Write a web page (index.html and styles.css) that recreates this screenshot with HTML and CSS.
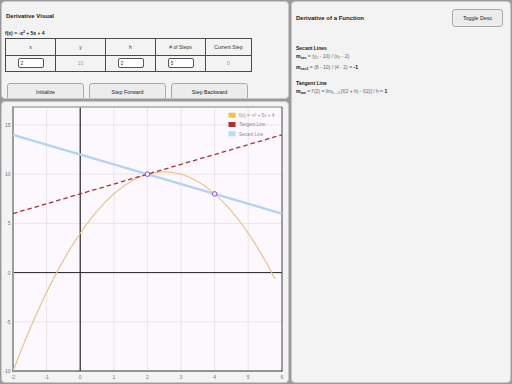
FILE: index.html
```html
<!DOCTYPE html>
<html lang="en">
<head>
  <meta charset="UTF-8">
  <meta name="viewport" content="width=device-width, initial-scale=1.0">
  <title>Derivative Visual</title>
  <link rel="stylesheet" href="styles.css">
</head>
<body>
  <div class="left">
    <section class="panel controls">
      <h2 class="title">Derivative Visual</h2>
      <div class="func">f(x) = -x<sup>2</sup> + 5x + 4</div>
      <table class="params">
        <colgroup>
          <col style="width: 50px"><col style="width: 50px"><col style="width: 50px"><col style="width: 50px"><col style="width: 46px">
        </colgroup>
        <tr>
          <th>x</th><th>y</th><th>h</th><th># of Steps</th><th>Current Step</th>
        </tr>
        <tr>
          <td><input type="text" value="2"></td>
          <td class="val">10</td>
          <td><input type="text" value="2"></td>
          <td><input type="text" value="5"></td>
          <td class="val">0</td>
        </tr>
      </table>
      <div class="buttons">
        <button>Initialize</button>
        <button>Step Forward</button>
        <button>Step Backward</button>
      </div>
    </section>

    <section class="panel chart">
      <svg width="286" height="280" viewBox="2 102 286 280">
        <rect x="13" y="107" width="269" height="264" fill="#fdf8fd"/>
        <!-- grid -->
        <g stroke="#e3dfe3" stroke-width="0.8">
          <line x1="46.6" y1="107" x2="46.6" y2="371"/>
          <line x1="113.8" y1="107" x2="113.8" y2="371"/>
          <line x1="147.4" y1="107" x2="147.4" y2="371"/>
          <line x1="181" y1="107" x2="181" y2="371"/>
          <line x1="214.6" y1="107" x2="214.6" y2="371"/>
          <line x1="248.2" y1="107" x2="248.2" y2="371"/>
          <line x1="13" y1="125" x2="282" y2="125"/>
          <line x1="13" y1="174.2" x2="282" y2="174.2"/>
          <line x1="13" y1="223.4" x2="282" y2="223.4"/>
          <line x1="13" y1="321.8" x2="282" y2="321.8"/>
        </g>
        <!-- axes -->
        <line x1="80.2" y1="107" x2="80.2" y2="371" stroke="#111" stroke-width="1.1"/>
        <line x1="13" y1="272.6" x2="282" y2="272.6" stroke="#222" stroke-width="1"/>
        <!-- frame -->
        <line x1="12" y1="107" x2="282" y2="107" stroke="#a9a9a9" stroke-width="1.5"/>
        <line x1="13" y1="107" x2="13" y2="371" stroke="#9c9c9c" stroke-width="2"/>
        <line x1="282" y1="107" x2="282" y2="371.5" stroke="#444" stroke-width="1"/>
        <line x1="12" y1="371" x2="282.5" y2="371" stroke="#333" stroke-width="1"/>
        <!-- tick labels -->
        <g font-family="Liberation Sans, Arial, sans-serif" font-size="5" fill="#777" text-anchor="end">
          <text x="10.5" y="127">15</text>
          <text x="10.5" y="176">10</text>
          <text x="10.5" y="225">5</text>
          <text x="10.5" y="274.5">0</text>
          <text x="10.5" y="323.5">-5</text>
          <text x="10.5" y="373">-10</text>
        </g>
        <g font-family="Liberation Sans, Arial, sans-serif" font-size="5" fill="#777" text-anchor="middle">
          <text x="13" y="379">-2</text>
          <text x="46.6" y="379">-1</text>
          <text x="80.2" y="379">0</text>
          <text x="113.8" y="379">1</text>
          <text x="147.4" y="379">2</text>
          <text x="181" y="379">3</text>
          <text x="214.6" y="379">4</text>
          <text x="248.2" y="379">5</text>
          <text x="281.8" y="379">6</text>
        </g>
        <!-- secant, curve, tangent -->
        <line x1="13" y1="134.8" x2="281.8" y2="213.6" stroke="#b6d3ee" stroke-width="2.4"/>
        <path d="M13 371 Q144.04 25.62 275.08 278.9" fill="none" stroke="#e6c07e" stroke-width="1.1"/>
        <line x1="13" y1="213.6" x2="281.8" y2="134.8" stroke="#a83236" stroke-width="1.3" stroke-dasharray="4.5 3"/>
        <circle cx="147.4" cy="174.2" r="2.3" fill="#f4eefc" stroke="#8440e8" stroke-width="0.9"/>
        <circle cx="214.6" cy="193.9" r="2.3" fill="#f4eefc" stroke="#8440e8" stroke-width="0.9"/>
        <!-- legend -->
        <rect x="228.5" y="112.7" width="7" height="5" fill="#f1c344"/>
        <rect x="228.5" y="122" width="7" height="5" fill="#a83236"/>
        <rect x="228.5" y="131.3" width="7" height="5" fill="#b7dcf7"/>
        <g font-family="Liberation Sans, Arial, sans-serif" font-size="4.6" fill="#8a8a8a">
          <text x="239" y="117">f(x) = -x<tspan font-size="3" dy="-1.5">2</tspan><tspan dy="1.5"> + 5x + 4</tspan></text>
          <text x="239" y="126.3">Tangent Line</text>
          <text x="239" y="135.6">Secant Line</text>
        </g>
      </svg>
    </section>
  </div>

  <section class="panel desc">
    <div class="desc-head">
      <h2 class="title">Derivative of a Function</h2>
      <button class="toggle">Toggle Desc</button>
    </div>

    <div class="block">
      <h3>Secant Lines</h3>
      <p><b>m<sub>sec</sub></b> = (y<sub>2</sub> - 10) / (x<sub>2</sub> - 2)</p>
      <p><b>m<sub>sec1</sub></b> = (8 - 10) / (4 - 2) = <b>-1</b></p>
    </div>

    <div class="block">
      <h3>Tangent Line</h3>
      <p><b>m<sub>tan</sub></b> = f'(2) = lim<sub>h&rarr;0</sub> [f(2 + h) - f(2)] / h = <b>1</b></p>
    </div>
  </section>
</body>
</html>
```

FILE: styles.css
```css
* {
  box-sizing: border-box;
}

body {
  margin: 0;
  padding: 1px;
  height: 384px;
  display: flex;
  gap: 2px;
  background-color: #999;
  font-family: "Liberation Sans", Arial, sans-serif;
  color: #222;
  overflow: hidden;
}

.left {
  width: 288px;
  display: flex;
  flex-direction: column;
  gap: 2px;
}

.panel {
  background-color: #f3f3f3;
  border: 1px solid #c9c9c9;
  border-radius: 4px;
}

.title {
  margin: 0;
  font-size: 6px;
  line-height: 8px;
  font-weight: bold;
  color: #222;
}

/* controls */

.controls {
  height: 98px;
  padding: 10px 4px 0 3px;
  overflow: hidden;
}

.controls .title {
  margin-left: 1px;
}

.func {
  margin-top: 9px;
  font-size: 5px;
  line-height: 7px;
  font-weight: bold;
}

.func sup {
  font-size: 3.5px;
  vertical-align: 2px;
}

.params {
  margin-top: 1px;
  border-collapse: collapse;
  table-layout: fixed;
  width: 246px;
}

.params th,
.params td {
  border: 1px solid #4a4a4a;
  height: 16.5px;
  padding: 0;
  text-align: center;
  font-size: 5px;
  font-weight: normal;
  color: #333;
}

.params td.val {
  color: #999;
}

.params input {
  width: 26px;
  height: 10px;
  padding: 0 2px;
  border: 1px solid #555;
  border-radius: 2px;
  background-color: #fff;
  font-family: "Liberation Sans", Arial, sans-serif;
  font-size: 5px;
  color: #333;
  vertical-align: middle;
}

.buttons {
  display: flex;
  gap: 5px;
  margin: 11px 0 0 2px;
}

button {
  font-family: "Liberation Sans", Arial, sans-serif;
  font-size: 5.3px;
  color: #222;
  background-color: #ececec;
  border: 1px solid #aaa;
  border-radius: 3px;
  padding: 0;
}

.buttons button {
  width: 77px;
  height: 18px;
}

/* chart */

.chart {
  flex: 1;
  overflow: hidden;
}

.chart svg {
  display: block;
}

/* description */

.desc {
  flex: 1;
  padding: 7px 7px 0 4px;
}

.desc-head {
  display: flex;
  justify-content: space-between;
  align-items: flex-start;
}

.desc-head .title {
  margin-top: 5px;
}

.toggle {
  width: 51px;
  height: 18px;
}

.block {
  margin-top: 17px;
}

.block + .block {
  margin-top: 5px;
}

.block h3 {
  margin: 0;
  font-size: 5px;
  line-height: 8px;
  font-weight: bold;
  color: #222;
}

.block p {
  margin: 0;
  font-size: 5px;
  line-height: 9px;
  color: #666;
}

.block p b {
  color: #111;
}

.block sub {
  font-size: 3.6px;
  vertical-align: -1px;
}
```
